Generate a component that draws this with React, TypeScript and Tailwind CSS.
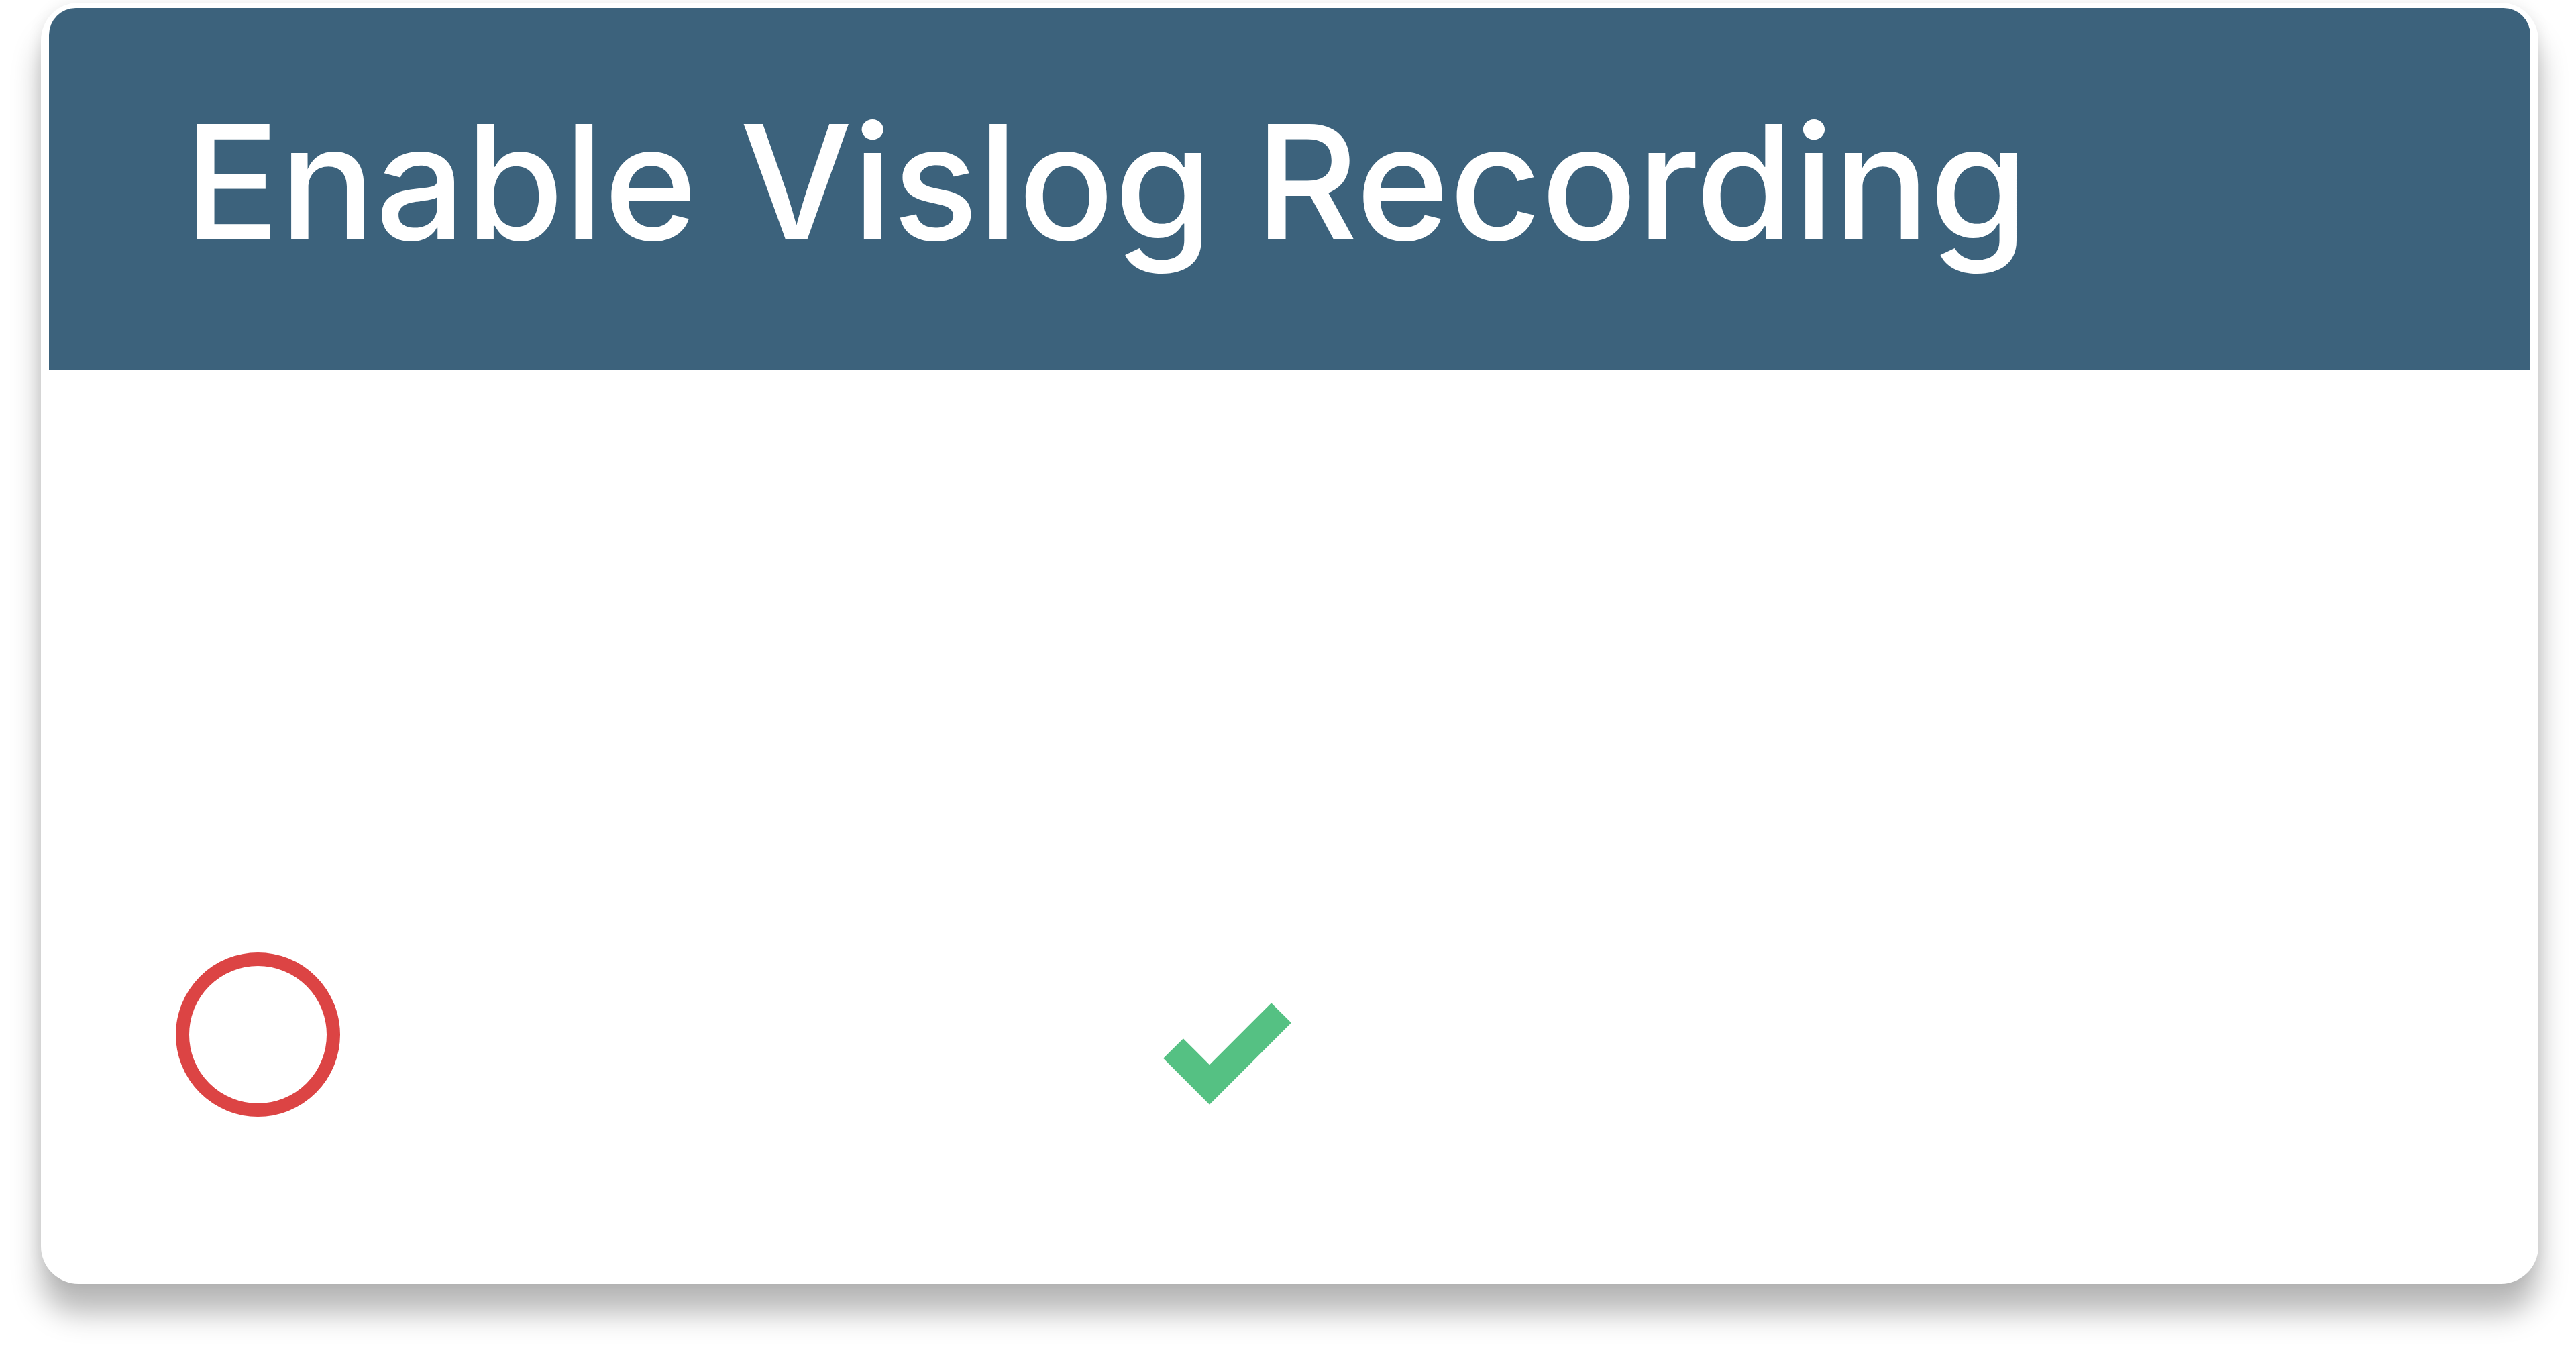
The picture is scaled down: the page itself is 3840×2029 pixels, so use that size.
// Vislog recording toggle card: title bar, then a status row (not recorded / ok)
function CheckMark() {
  return (
    <svg viewBox="0 0 191 152" className="ml-[1227px] mt-[56px] h-[152px] w-[191px]" fill="none">
      <polyline
        points="15,68 69,122 176,15"
        stroke="#55c183"
        strokeWidth="42"
        strokeLinecap="butt"
        strokeLinejoin="miter"
      />
    </svg>
  );
}

export default function App() {
  return (
    <main className="min-h-screen w-full bg-white pl-[61px] pr-[56px] pt-[4px] font-['Inter',sans-serif]">
      <div className="rounded-[56px] bg-white px-[12px] pt-[8px] shadow-[0_44px_44px_rgba(0,0,0,0.28),0_0_22px_rgba(0,0,0,0.08)]">
        <header className="flex h-[539px] items-start rounded-t-[40px] bg-[#3c627c] pl-[201px] pt-[140px]">
          <h1 className="text-[237px] font-medium leading-none text-white">
            Enable Vislog Recording
          </h1>
        </header>
        <section className="flex items-center pb-[249px] pl-[189px] pt-[869px]">
          <div className="h-[245px] w-[245px] rounded-full border-[20px] border-[#dc4444]" />
          <CheckMark />
        </section>
      </div>
    </main>
  );
}
